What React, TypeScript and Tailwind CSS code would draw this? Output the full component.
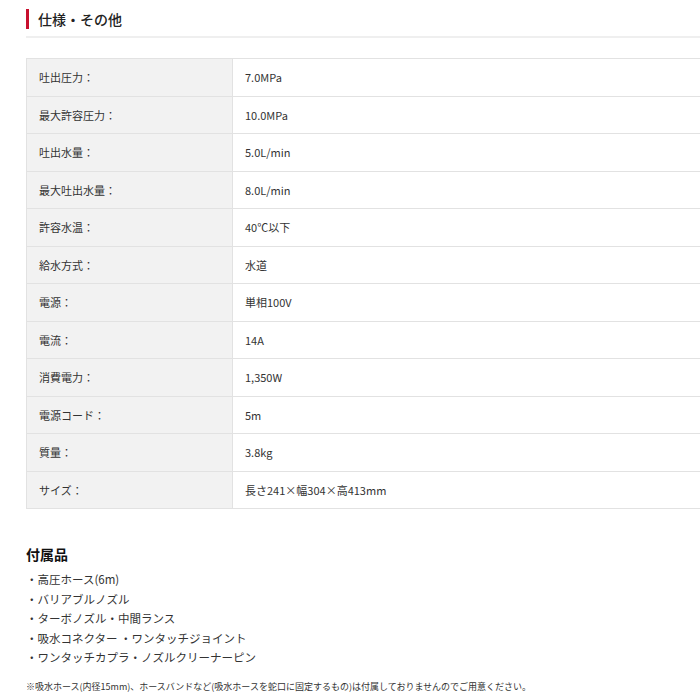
const specs: [string, string][] = [
  ['吐出圧力：', '7.0MPa'],
  ['最大許容圧力：', '10.0MPa'],
  ['吐出水量：', '5.0L/min'],
  ['最大吐出水量：', '8.0L/min'],
  ['許容水温：', '40℃以下'],
  ['給水方式：', '水道'],
  ['電源：', '単相100V'],
  ['電流：', '14A'],
  ['消費電力：', '1,350W'],
  ['電源コード：', '5m'],
  ['質量：', '3.8kg'],
  ['サイズ：', '長さ241×幅304×高413mm'],
]

const accessories = [
  '・高圧ホース(6m)',
  '・バリアブルノズル',
  '・ターボノズル・中間ランス',
  '・吸水コネクター ・ワンタッチジョイント',
  '・ワンタッチカプラ・ノズルクリーナーピン',
]

export default function App() {
  return (
    <div className="w-[700px] h-[700px] overflow-hidden bg-white text-[#333] font-['Noto_Sans_CJK_JP',sans-serif]">
      <div className="pl-[26px]">
        <div className="pt-[8px] pb-[7px] border-b-2 border-[#efefef]">
          <h2 className="flex items-center h-[21px] text-[14px] font-medium leading-none text-[#222]">
            <span className="w-[3px] h-[20px] bg-[#c8102e] mr-[9px]" />
            仕様・その他
          </h2>
        </div>

        <table className="mt-[20px] w-[700px] border-collapse text-[11px]">
          <tbody>
            {specs.map(([k, v]) => (
              <tr key={k} className="h-[37.5px]">
                <td className="w-[206px] bg-[#f2f2f2] border border-[#e2e2e2] pl-[12px] align-middle">{k}</td>
                <td className="border border-[#e2e2e2] pl-[12px] align-middle">{v}</td>
              </tr>
            ))}
          </tbody>
        </table>

        <h3 className="mt-[35px] text-[14px] font-bold leading-[20px] text-[#111]">付属品</h3>
        <ul className="mt-[6px] text-[11.5px] leading-[19.5px]">
          {accessories.map(a => <li key={a}>{a}</li>)}
        </ul>
        <p className="mt-[12px] text-[9px] leading-[14px]">
          ※吸水ホース(内径15mm)、ホースバンドなど(吸水ホースを蛇口に固定するもの)は付属しておりませんのでご用意ください。
        </p>
      </div>
    </div>
  )
}
